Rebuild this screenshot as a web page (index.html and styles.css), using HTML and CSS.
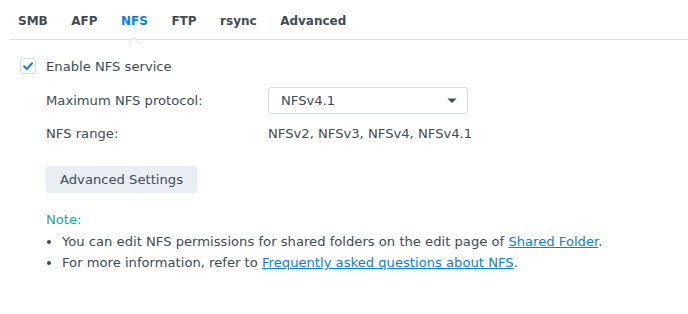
FILE: index.html
```html
<!DOCTYPE html>
<html>
<head>
<meta charset="utf-8">
<link rel="stylesheet" href="styles.css">
</head>
<body>
<div class="tabs">
  <span class="tab">SMB</span>
  <span class="tab">AFP</span>
  <span class="tab active">NFS</span>
  <span class="tab">FTP</span>
  <span class="tab">rsync</span>
  <span class="tab">Advanced</span>
</div>
<div class="panel">
  <label class="check-row">
    <span class="checkbox">
      <svg width="16" height="16" viewBox="0 0 16 16"><path d="M3.6 8.3 L6.7 11.3 L12.6 4.9" fill="none" stroke="#0a80f0" stroke-width="2.4" stroke-linecap="round" stroke-linejoin="round"/></svg>
    </span>
    <span>Enable NFS service</span>
  </label>
  <div class="field">
    <span class="label">Maximum NFS protocol:</span>
    <div class="select">
      <span>NFSv4.1</span>
      <svg width="10" height="6" viewBox="0 0 10 6"><path d="M0.5 0.5 H9.5 L5 5 Z" fill="#414b55"/></svg>
    </div>
  </div>
  <div class="field range">
    <span class="label">NFS range:</span>
    <span class="value">NFSv2, NFSv3, NFSv4, NFSv4.1</span>
  </div>
  <button class="btn">Advanced Settings</button>
  <div class="note">
    <div class="note-title">Note:</div>
    <ul>
      <li>You can edit NFS permissions for shared folders on the edit page of <a href="#">Shared Folder</a>.</li>
      <li>For more information, refer to <a href="#">Frequently asked questions about NFS</a>.</li>
    </ul>
  </div>
</div>
</body>
</html>
```
FILE: styles.css
```css
html, body {
  margin: 0;
  padding: 0;
  background: #fff;
}
body {
  font-family: "DejaVu Sans", Verdana, sans-serif;
  font-size: 13.15px;
  color: #414b55;
  width: 688px;
  height: 314px;
  overflow: hidden;
}
.tabs {
  display: flex;
  gap: 23.5px;
  height: 39px;
  align-items: center;
  border-bottom: 1px solid #d9e0e6;
  margin-left: 10px;
  padding-left: 8px;
}
.tab {
  font-weight: bold;
  font-size: 12px;
  color: #414b55;
  position: relative;
  line-height: 16px;
  margin-top: 3px;
}
.tab.active {
  color: #057feb;
}
.tab.active::after {
  content: "";
  position: absolute;
  left: 50%;
  top: 26px;
  width: 8px;
  height: 8px;
  margin-left: -4px;
  background: #fff;
  border-left: 1px solid #d9e0e6;
  border-top: 1px solid #d9e0e6;
  transform: rotate(45deg);
}
.panel {
  padding: 17px 0 0 20px;
}
.check-row {
  display: flex;
  align-items: center;
  gap: 10px;
  height: 18px;
}
.checkbox {
  box-sizing: border-box;
  width: 16px;
  height: 16px;
  border: 1px solid #d3dbe4;
  border-radius: 3px;
  display: flex;
  align-items: center;
  justify-content: center;
  background: #fff;
}
.field {
  display: flex;
  align-items: center;
  margin-left: 26px;
  margin-top: 12px;
}
.label {
  width: 222px;
}
.select {
  box-sizing: border-box;
  width: 200px;
  height: 27px;
  border: 1px solid #d6dde5;
  border-radius: 3px;
  display: flex;
  align-items: center;
  justify-content: space-between;
  padding: 0 10px 0 12px;
}
.range {
  margin-top: 12px;
}
.btn {
  display: block;
  margin: 25px 0 0 26px;
  font-family: inherit;
  font-size: 13.15px;
  color: #414b55;
  background: #e9eef5;
  border: none;
  border-radius: 3px;
  height: 27px;
  padding: 0 14px;
}
.note {
  margin: 19px 0 0 26px;
}
.note-title {
  color: #1aa6a0;
}
ul {
  margin: 4px 0 0 0;
  padding: 0 0 0 16px;
}
li {
  line-height: 21px;
}
a {
  color: #0a7ee6;
  text-decoration: underline;
}
```
